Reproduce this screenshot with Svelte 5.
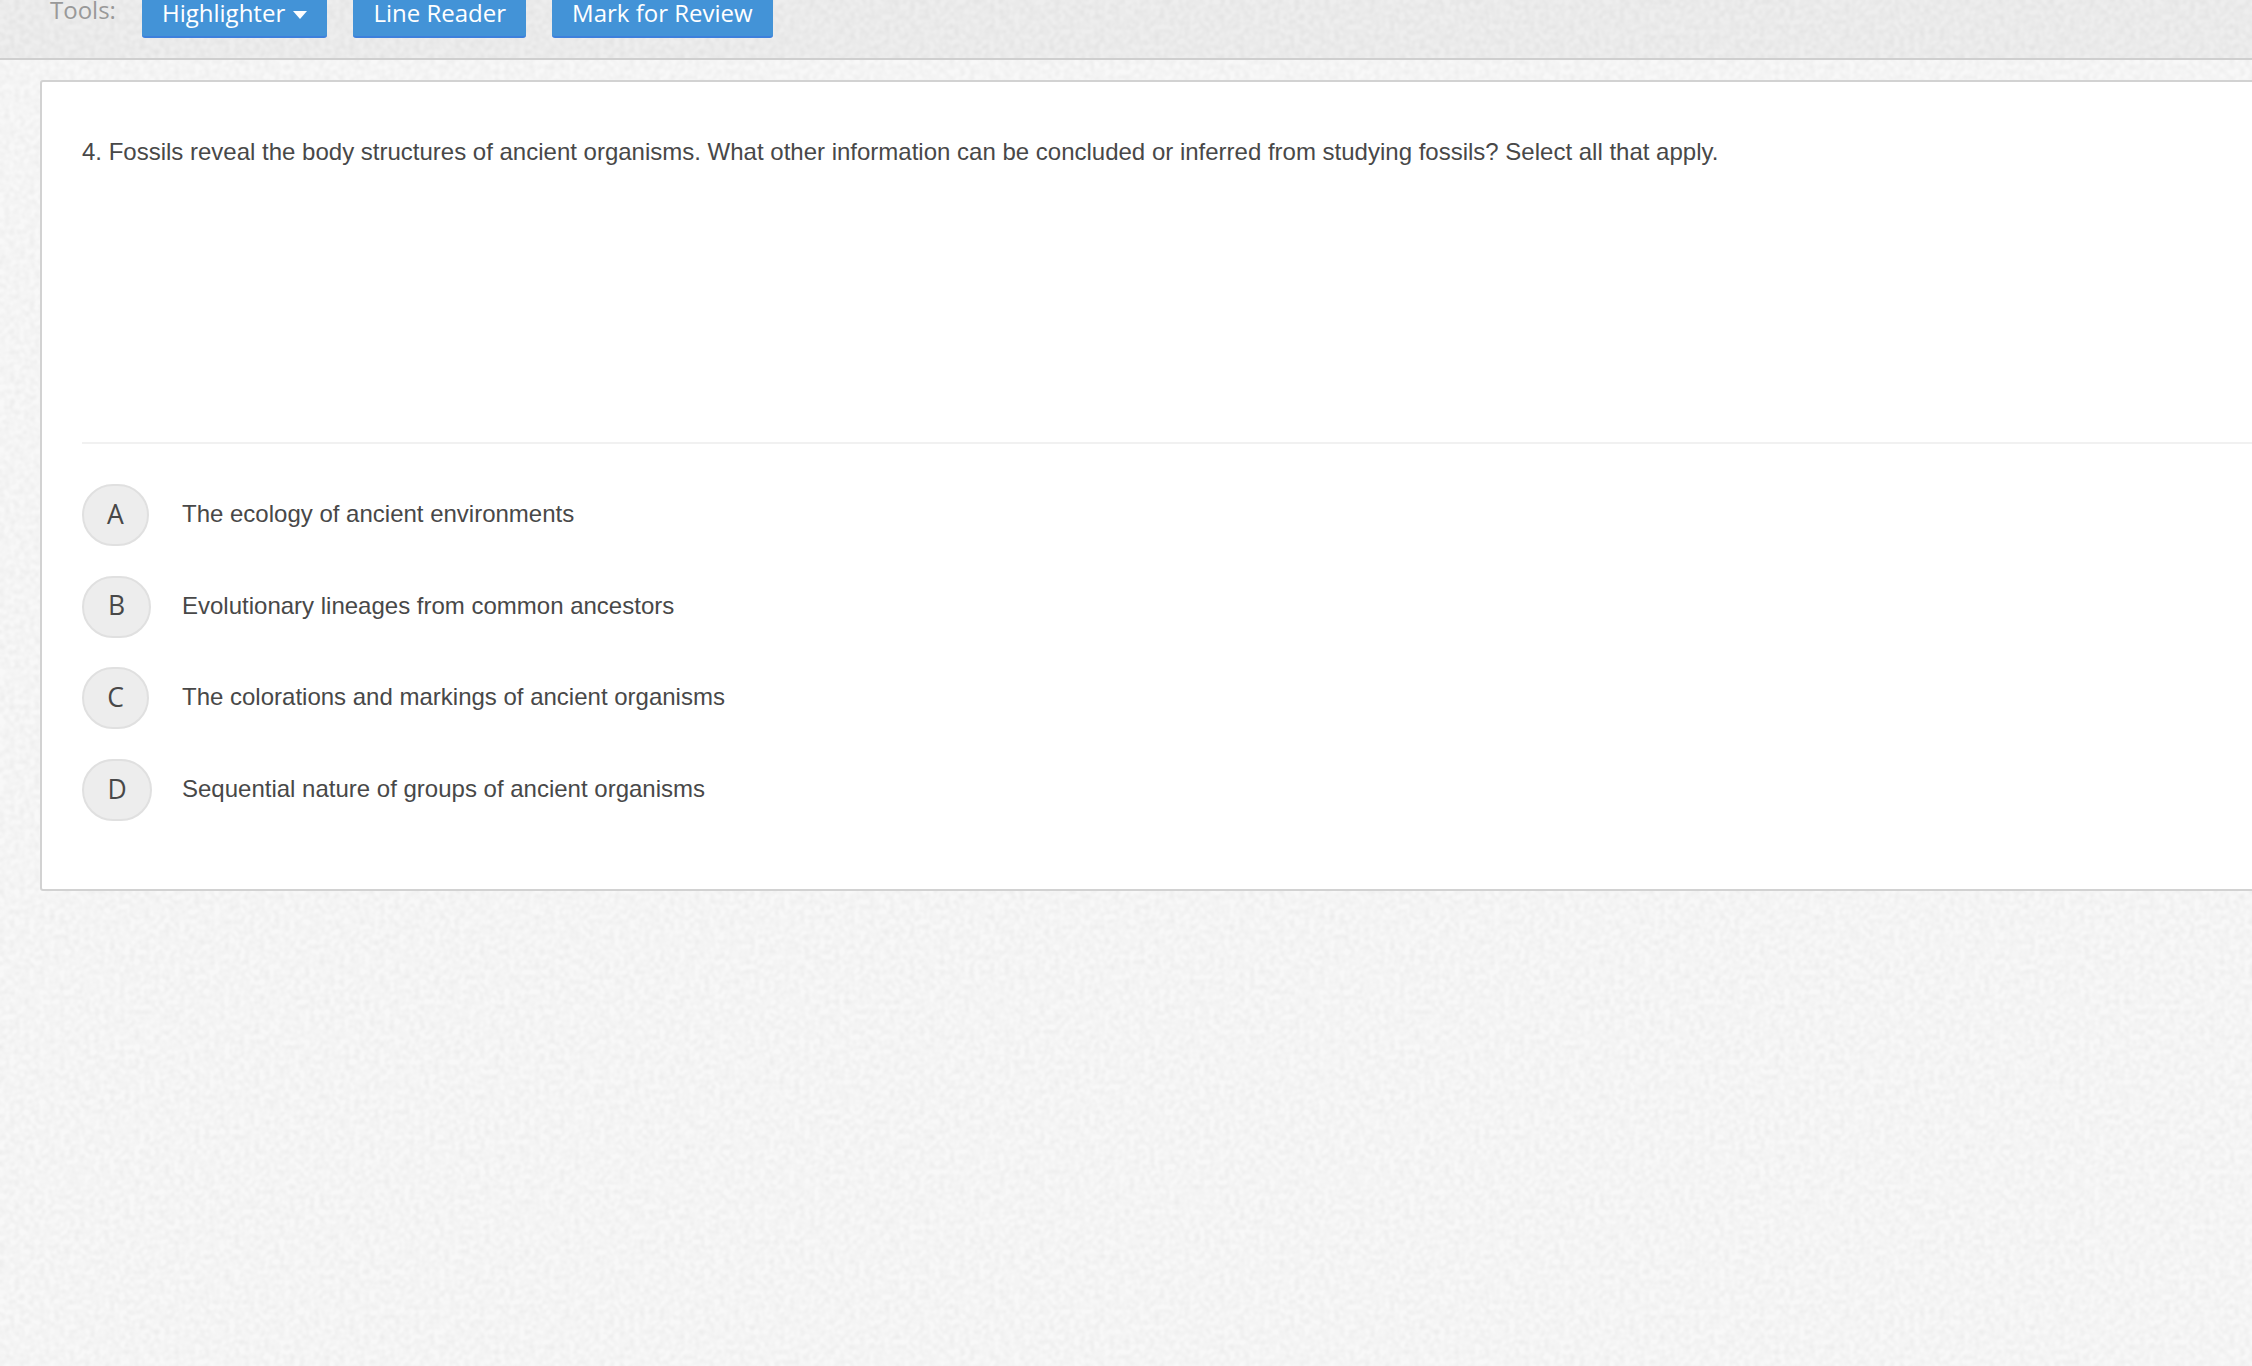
<script>
  const options = [
    { letter: 'A', text: 'The ecology of ancient environments' },
    { letter: 'B', text: 'Evolutionary lineages from common ancestors' },
    { letter: 'C', text: 'The colorations and markings of ancient organisms' },
    { letter: 'D', text: 'Sequential nature of groups of ancient organisms' }
  ];
</script>

<div class="page">
  <svg class="texture" aria-hidden="true">
    <filter id="paper" x="0" y="0" width="100%" height="100%">
      <feTurbulence type="fractalNoise" baseFrequency="0.2" numOctaves="3" seed="4" />
      <feGaussianBlur stdDeviation="0.8" />
      <feColorMatrix type="matrix" values="0 0 0 0 0  0 0 0 0 0  0 0 0 0 0  0.1 0 0 0 -0.035" />
    </filter>
    <rect width="100%" height="100%" filter="url(#paper)" />
  </svg>

  <header class="toolbar">
    <span class="label">Tools:</span>
    <button class="tool">Highlighter <span class="caret"></span></button>
    <button class="tool">Line Reader</button>
    <button class="tool">Mark for Review</button>
  </header>

  <main class="panel">
    <p class="question">4. Fossils reveal the body structures of ancient organisms. What other information can be concluded or inferred from studying fossils? Select all that apply.</p>
    <hr class="rule" />
    <ul class="options">
      {#each options as o}
        <li class="option">
          <span class="letter">{o.letter}</span>
          <span class="text">{o.text}</span>
        </li>
      {/each}
    </ul>
  </main>
</div>

<style>
  :global(body) {
    margin: 0;
    background: #f7f7f7;
  }
  .page {
    position: relative;
    width: 2252px;
    height: 1366px;
    overflow: hidden;
    background: #f8f8f8;
  }
  .texture {
    position: absolute;
    inset: 0;
    width: 100%;
    height: 100%;
  }
  .toolbar {
    position: relative;
    box-sizing: border-box;
    height: 60px;
    display: flex;
    align-items: flex-end;
    padding: 0 0 20px 50px;
    background: rgba(0, 0, 0, 0.04);
    border-bottom: 2px solid #cfcfcf;
  }
  .label {
    font: 24px/18px "Open Sans", sans-serif;
    color: #999;
    width: 92px;
    flex: none;
    padding-bottom: 19px;
  }
  .tool {
    box-sizing: border-box;
    height: 38px;
    margin-right: 26px;
    padding: 0 20px 11px;
    flex: none;
    font: 24px/24px "Open Sans", sans-serif;
    color: #fff;
    background: #4393d7;
    border: 0;
    border-bottom: 2px solid #3d80dc;
    border-radius: 0 0 3px 3px;
    display: flex;
    align-items: flex-end;
    gap: 2px;
    white-space: pre;
  }
  .caret {
    width: 0;
    height: 0;
    margin-bottom: 6px;
    border-left: 7px solid transparent;
    border-right: 7px solid transparent;
    border-top: 8px solid #fff;
  }
  .panel {
    position: relative;
    box-sizing: border-box;
    width: 2300px;
    height: 811px;
    margin: 20px 0 0 40px;
    padding: 0 0 0 40px;
    background: #fff;
    border: 2px solid #d2d2d2;
    border-radius: 3px;
  }
  .question {
    margin: 0;
    height: 360px;
    padding-top: 54px;
    box-sizing: border-box;
    font: 24px/32px "Liberation Sans", Arial, sans-serif;
    color: #484848;
  }
  .rule {
    margin: 0;
    border: 0;
    border-top: 2px solid #f1f1f1;
  }
  .options {
    list-style: none;
    margin: 40px 0 0;
    padding: 0;
    display: flex;
    flex-direction: column;
    gap: 29.6px;
  }
  .option {
    display: flex;
    align-items: center;
    height: 62px;
  }
  .letter {
    box-sizing: border-box;
    height: 62px;
    padding: 0 0 2px;
    display: flex;
    align-items: center;
    justify-content: center;
    font: 26.5px/1 "Open Sans", sans-serif;
    color: #484848;
    background: #ededed;
    border: 2px solid #e0e0e0;
    border-radius: 34px;
  }
  .text {
    font: 24px/32px "Liberation Sans", Arial, sans-serif;
    color: #484848;
    margin-top: -2px;
  }
  .option:nth-child(1) .letter { width: 67px; margin-right: 33px; }
  .option:nth-child(2) .letter { width: 69px; margin-right: 31px; }
  .option:nth-child(3) .letter { width: 67px; margin-right: 33px; }
  .option:nth-child(4) .letter { width: 70px; margin-right: 30px; }
</style>
